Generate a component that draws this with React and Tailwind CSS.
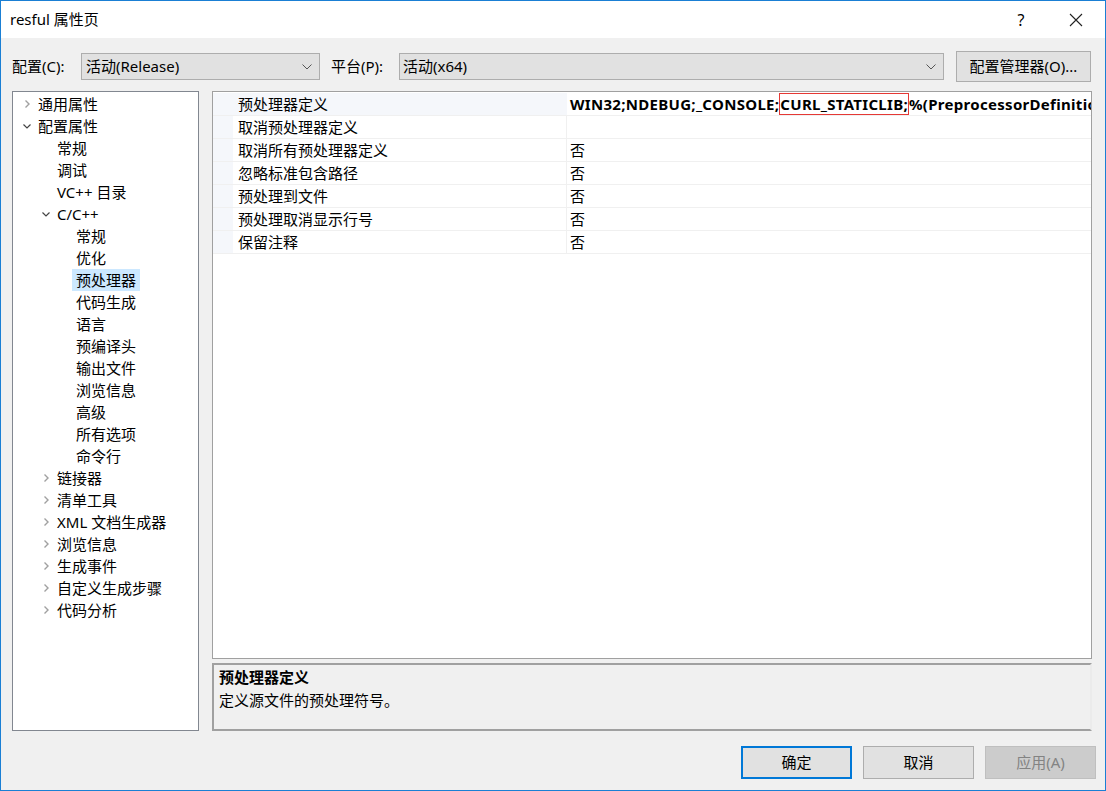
import React from "react";

const font = "font-['Noto_Sans','Noto_Sans_CJK_SC',sans-serif]";

const tree = [
  { label: "通用属性", level: 0, arrow: "right" },
  { label: "配置属性", level: 0, arrow: "down" },
  { label: "常规", level: 1 },
  { label: "调试", level: 1 },
  { label: "VC++ 目录", level: 1 },
  { label: "C/C++", level: 1, arrow: "down" },
  { label: "常规", level: 2 },
  { label: "优化", level: 2 },
  { label: "预处理器", level: 2, selected: true },
  { label: "代码生成", level: 2 },
  { label: "语言", level: 2 },
  { label: "预编译头", level: 2 },
  { label: "输出文件", level: 2 },
  { label: "浏览信息", level: 2 },
  { label: "高级", level: 2 },
  { label: "所有选项", level: 2 },
  { label: "命令行", level: 2 },
  { label: "链接器", level: 1, arrow: "right" },
  { label: "清单工具", level: 1, arrow: "right" },
  { label: "XML 文档生成器", level: 1, arrow: "right" },
  { label: "浏览信息", level: 1, arrow: "right" },
  { label: "生成事件", level: 1, arrow: "right" },
  { label: "自定义生成步骤", level: 1, arrow: "right" },
  { label: "代码分析", level: 1, arrow: "right" },
];

const props = [
  { name: "取消预处理器定义", value: "" },
  { name: "取消所有预处理器定义", value: "否" },
  { name: "忽略标准包含路径", value: "否" },
  { name: "预处理到文件", value: "否" },
  { name: "预处理取消显示行号", value: "否" },
  { name: "保留注释", value: "否" },
];

function Arrow({ dir }) {
  if (dir === "down") {
    return (
      <svg width="10" height="10" viewBox="0 0 10 10" className="shrink-0">
        <path d="M1.5 3.5 L5 7 L8.5 3.5" fill="none" stroke="#444" strokeWidth="1.2" />
      </svg>
    );
  }
  return (
    <svg width="10" height="10" viewBox="0 0 10 10" className="shrink-0">
      <path d="M3.5 1.5 L7 5 L3.5 8.5" fill="none" stroke="#a0a0a0" strokeWidth="1.4" />
    </svg>
  );
}

function Chevron() {
  return (
    <svg width="12" height="8" viewBox="0 0 12 8">
      <path d="M1.5 1.5 L6 6 L10.5 1.5" fill="none" stroke="#555" strokeWidth="1" />
    </svg>
  );
}

function TreeRow({ item }) {
  const pad = item.level === 0 ? "pl-[9px]" : item.level === 1 ? "pl-[28px]" : "pl-[47px]";
  return (
    <div className={`flex items-center h-[22px] ${pad}`}>
      <div className="w-[16px] flex items-center">{item.arrow && <Arrow dir={item.arrow} />}</div>
      <span className={`leading-[22px] ${item.selected ? "bg-[#cce8ff] px-[4px] -ml-[4px]" : ""}`}>{item.label}</span>
    </div>
  );
}

export default function App() {
  return (
    <div className={`w-[1106px] h-[791px] border border-[#1a7fd4] bg-[#f0f0f0] flex flex-col text-[15px] text-black ${font}`}>
      {/* title bar */}
      <div className="h-[37px] bg-white flex items-center pl-[9px] shrink-0">
        <span className="flex-1">resful 属性页</span>
        <span className="w-[20px] text-center text-[16px] mr-[38px]">?</span>
        <svg width="14" height="14" viewBox="0 0 14 14" className="mr-[22px]">
          <path d="M1 1 L13 13 M13 1 L1 13" stroke="#222" strokeWidth="1.1" />
        </svg>
      </div>

      <div className="flex-1 flex flex-col px-[11px] pt-[13px]">
        {/* config row */}
        <div className="flex items-center h-[31px]">
          <span className="w-[69px]">配置(C):</span>
          <div className="w-[239px] h-[27px] bg-[#e1e1e1] border border-[#adadad] flex items-center pl-[4px] pr-[6px]">
            <span className="flex-1">活动(Release)</span>
            <Chevron />
          </div>
          <span className="w-[68px] ml-[11px]">平台(P):</span>
          <div className="w-[545px] h-[27px] bg-[#e1e1e1] border border-[#adadad] flex items-center pl-[3px] pr-[6px]">
            <span className="flex-1">活动(x64)</span>
            <Chevron />
          </div>
          <div className="ml-[12px] w-[135px] h-[31px] bg-[#e1e1e1] border border-[#adadad] flex items-center justify-center">
            配置管理器(O)...
          </div>
        </div>

        {/* main */}
        <div className="flex mt-[9px] h-[640px] gap-[13px]">
          <div className="w-[187px] bg-white border border-[#828790] pt-[1px]">
            {tree.map((t, i) => (
              <TreeRow key={i} item={t} />
            ))}
          </div>

          <div className="w-[880px] flex flex-col gap-[4px]">
            <div className="h-[568px] bg-white border border-[#a0a0a0]">
              <div className="flex flex-col pt-[1px]">
                <div className="flex h-[23px] border-b border-[#f0f0f0]">
                  <div className="w-[354px] bg-[#f5f7fb] pl-[25px] leading-[23px]">预处理器定义</div>
                  <div className="flex-1 pl-[3px] font-bold tracking-[0.3px] leading-[23px] whitespace-nowrap overflow-hidden flex items-center">
                    <span>WIN32;NDEBUG;_CONSOLE;</span>
                    <span className="border border-[#e53935] h-[22px] leading-[20px]">CURL_STATICLIB;</span>
                    <span>%(PreprocessorDefinitions)</span>
                  </div>
                </div>
                {props.map((p, i) => (
                  <div key={i} className="flex h-[23px] border-b border-[#f0f0f0]">
                    <div className="w-[20px] bg-[#f5f7fb]" />
                    <div className="w-[334px] pl-[5px] leading-[22px] border-r border-[#f0f0f0]">{p.name}</div>
                    <div className="flex-1 pl-[3px] leading-[22px]">{p.value}</div>
                  </div>
                ))}
              </div>
            </div>
            <div className="h-[68px] border-2 border-[#a0a0a0] border-r-[#ebebeb] border-b-[#a0a0a0] px-[5px] pt-[1px]">
              <div className="font-bold leading-[23px]">预处理器定义</div>
              <div className="leading-[23px]">定义源文件的预处理符号。</div>
            </div>
          </div>
        </div>

        {/* buttons */}
        <div className="flex justify-end gap-[11px] mt-[15px] -mr-[2px]">
          <div className="w-[111px] h-[33px] bg-[#e1e1e1] border-2 border-[#0078d7] flex items-center justify-center">确定</div>
          <div className="w-[111px] h-[33px] bg-[#e1e1e1] border border-[#adadad] flex items-center justify-center">取消</div>
          <div className="w-[111px] h-[33px] bg-[#cccccc] border border-[#bfbfbf] text-[#838383] flex items-center justify-center">应用(A)</div>
        </div>
      </div>
    </div>
  );
}
